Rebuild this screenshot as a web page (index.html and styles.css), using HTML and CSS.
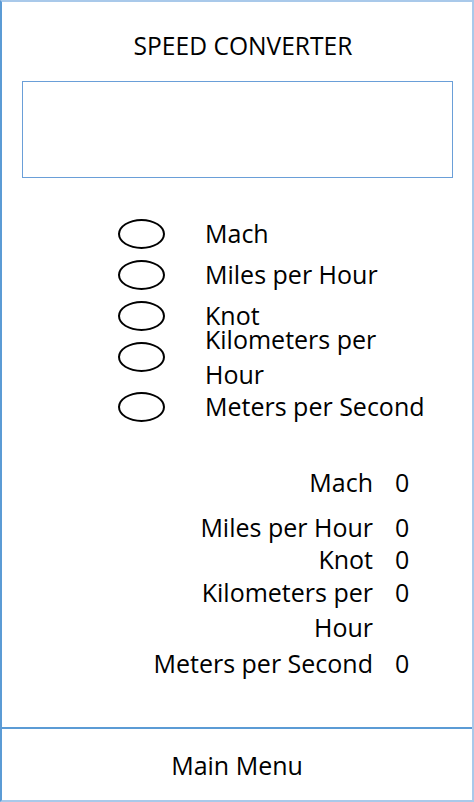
FILE: index.html
```html
<!DOCTYPE html>
<html>

<head>
    <meta charset="UTF-8">
    <meta name="viewport" content="width=device-width, initial-scale=1.0">
    <title>Speed Converter</title>
    <link rel="stylesheet" href="styles.css">
</head>

<body>
    <div class="frame">
        <div class="content">
            <h1 class="title">SPEED CONVERTER</h1>

            <input type="text" class="amount" id="amount">

            <div class="options">
                <label class="option"><input type="radio" name="unit" value="mach"><span>Mach</span></label>
                <label class="option"><input type="radio" name="unit" value="mph"><span>Miles per Hour</span></label>
                <label class="option"><input type="radio" name="unit" value="knot"><span>Knot</span></label>
                <label class="option wrap"><input type="radio" name="unit" value="kph"><span>Kilometers per Hour</span></label>
                <label class="option"><input type="radio" name="unit" value="mps"><span>Meters per Second</span></label>
            </div>

            <div class="results">
                <div class="result first"><span class="name">Mach</span><span class="value" id="mach">0</span></div>
                <div class="result"><span class="name">Miles per Hour</span><span class="value" id="mph">0</span></div>
                <div class="result"><span class="name">Knot</span><span class="value" id="knot">0</span></div>
                <div class="result tall"><span class="name">Kilometers per Hour</span><span class="value" id="kph">0</span></div>
                <div class="result"><span class="name">Meters per Second</span><span class="value" id="mps">0</span></div>
            </div>
        </div>

        <div class="footer">Main Menu</div>
    </div>
</body>

</html>
```

FILE: styles.css
```css
body {
    margin: 0;
    font-family: "Open Sans", "Noto Sans", sans-serif;
    color: #000;
    background: #fff;
}
.frame {
    height: 802px;
    box-sizing: border-box;
    border: 2px solid #a9c9ea;
    border-left-color: #5b9bd5;
    display: flex;
    flex-direction: column;
}
.content {
    flex: 1;
}
.title {
    margin: 0;
    padding: 28px 0 0 12px;
    font-size: 24.6px;
    font-weight: 400;
    line-height: 32px;
    text-align: center;
}
.amount {
    display: block;
    box-sizing: border-box;
    width: 431px;
    height: 97px;
    margin: 19px 0 0 20px;
    padding: 0 8px;
    border: 1px solid #6a9fd8;
    font: inherit;
    outline: none;
}
.options {
    margin-top: 35px;
    padding-left: 116px;
}
.option {
    display: flex;
    align-items: center;
    gap: 40px;
    height: 41px;
    font-size: 25px;
    line-height: 35px;
}
.option input {
    appearance: none;
    flex: none;
    width: 47px;
    height: 30px;
    margin: 0;
    box-sizing: border-box;
    border: 2px solid #000;
    border-radius: 50%;
}
.option input:checked {
    background: radial-gradient(#000 30%, transparent 34%);
}
.option span {
    width: 228px;
}
.option.wrap {
    margin-bottom: 9px;
}
.results {
    margin-top: 39px;
    padding-left: 143px;
    font-size: 25px;
    line-height: 32px;
}
.result {
    display: flex;
    align-items: baseline;
    gap: 22px;
}
.result.first {
    margin-bottom: 13px;
}
.result .name {
    width: 228px;
    text-align: right;
}
.result.tall {
    margin-bottom: 2px;
}
.result.tall .name {
    line-height: 35px;
}
.footer {
    height: 71px;
    border-top: 2px solid #5b9bd5;
    display: flex;
    align-items: center;
    justify-content: center;
    font-size: 25px;
}
```
